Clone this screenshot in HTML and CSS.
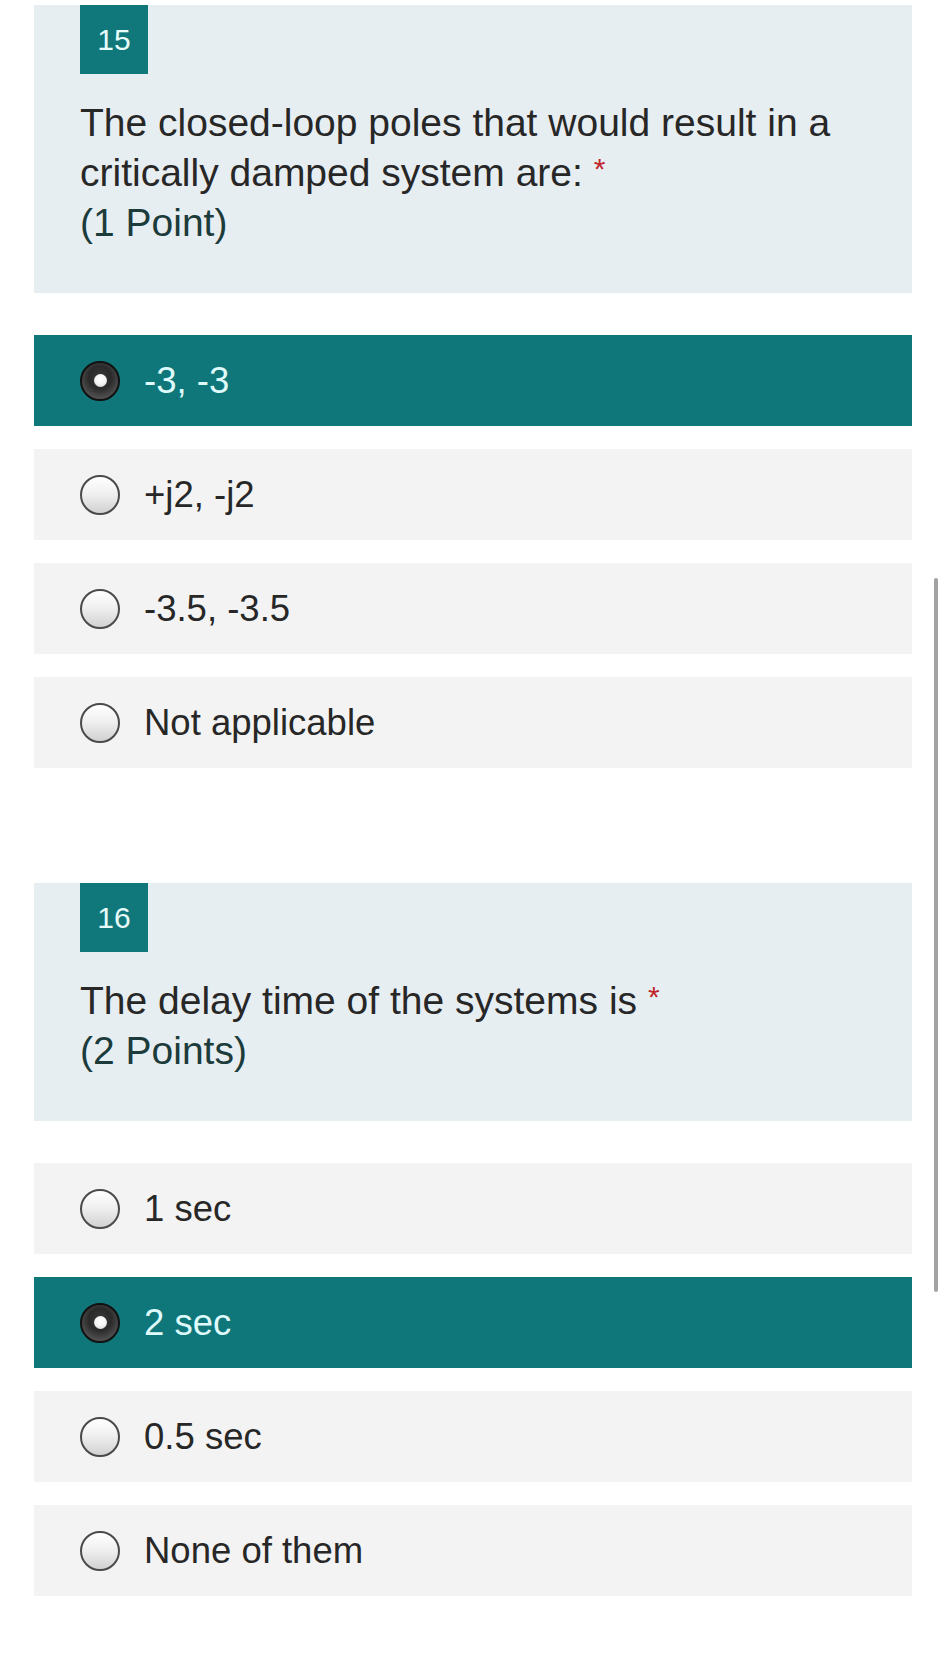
FILE: index.html
```html
<!DOCTYPE html>
<html lang="en">
<head>
<meta charset="utf-8">
<title>Quiz</title>
<link rel="stylesheet" href="styles.css">
</head>
<body>
<main class="page">
  <section class="question">
    <div class="q-head">
      <div class="badge">15</div>
      <div class="q-text">The closed-loop poles that would result in a critically damped system are: <span class="req">*</span><br><span class="points">(1 Point)</span></div>
    </div>
    <div class="options">
      <label class="option selected"><span class="radio"></span><span class="opt-text">-3, -3</span></label>
      <label class="option"><span class="radio"></span><span class="opt-text">+j2, -j2</span></label>
      <label class="option"><span class="radio"></span><span class="opt-text">-3.5, -3.5</span></label>
      <label class="option"><span class="radio"></span><span class="opt-text">Not applicable</span></label>
    </div>
  </section>
  <section class="question">
    <div class="q-head">
      <div class="badge">16</div>
      <div class="q-text">The delay time of the systems is <span class="req">*</span><br><span class="points">(2 Points)</span></div>
    </div>
    <div class="options">
      <label class="option"><span class="radio"></span><span class="opt-text">1 sec</span></label>
      <label class="option selected"><span class="radio"></span><span class="opt-text">2 sec</span></label>
      <label class="option"><span class="radio"></span><span class="opt-text">0.5 sec</span></label>
      <label class="option"><span class="radio"></span><span class="opt-text">None of them</span></label>
    </div>
  </section>
</main>
<div class="scrollbar"></div>
</body>
</html>
```

FILE: styles.css
```css
html, body {
  margin: 0;
  padding: 0;
  background: #ffffff;
}

body {
  font-family: "Liberation Sans", Arial, sans-serif;
  color: #262626;
  width: 946px;
  height: 1658px;
  overflow: hidden;
  position: relative;
}

.page {
  padding: 5px 0 0 34px;
  width: 878px;
  display: flex;
  flex-direction: column;
  gap: 115px;
}

.question {
  display: flex;
  flex-direction: column;
  gap: 42px;
}

.q-head {
  background: #e7eef2;
  padding: 0 46px 45px 46px;
  display: flex;
  flex-direction: column;
  align-items: flex-start;
  gap: 24px;
}

.badge {
  width: 68px;
  height: 69px;
  background: #10777b;
  color: #e8fbfb;
  font-size: 30px;
  display: flex;
  align-items: center;
  justify-content: center;
}

.q-text {
  font-size: 39px;
  line-height: 50px;
  color: #272727;
}

.req {
  color: #c0262c;
  font-size: 30px;
  line-height: normal;
  vertical-align: 7px;
}

.points {
  color: #1c3b3b;
}

.options {
  display: flex;
  flex-direction: column;
  gap: 23px;
}

.option {
  height: 91px;
  background: #f3f3f3;
  display: flex;
  align-items: center;
  padding-left: 46px;
  gap: 24px;
  font-size: 36.5px;
  color: #272727;
}

.option.selected {
  background: #0f767a;
  color: #dffafa;
}

.radio {
  width: 36px;
  height: 36px;
  border: 2px solid #4a4a4a;
  border-radius: 50%;
  background: linear-gradient(180deg, #ffffff 0%, #f0f0f0 45%, #d2d2d2 100%);
  flex: none;
  display: flex;
  align-items: center;
  justify-content: center;
  box-sizing: content-box;
}

.selected .radio {
  border-color: #111;
  background: radial-gradient(circle at 50% 40%, #3a3a3a 0%, #2a2a2a 40%, #6e6e6e 100%);
}

.selected .radio::after {
  content: "";
  width: 13px;
  height: 13px;
  border-radius: 50%;
  background: radial-gradient(circle at 50% 35%, #ffffff 0%, #f4f4f4 50%, #c9c9c9 100%);
}

.scrollbar {
  position: absolute;
  left: 934px;
  top: 578px;
  width: 4px;
  height: 714px;
  border-radius: 2px;
  background: #a2a2a2;
}
```
